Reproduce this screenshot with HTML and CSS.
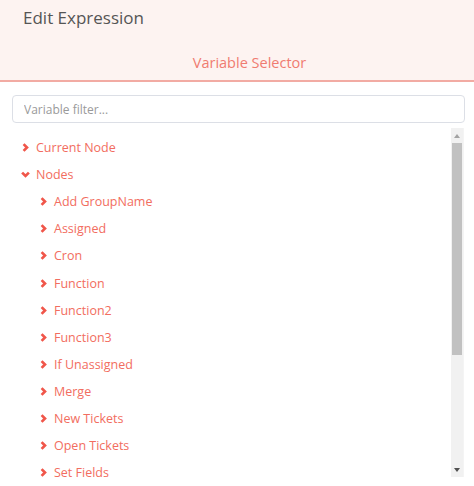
FILE: index.html
```html
<!DOCTYPE html>
<html lang="en">
<head>
    <meta charset="UTF-8">
    <meta name="viewport" content="width=device-width, initial-scale=1.0">
    <title>Edit Expression</title>
    <link rel="stylesheet" href="styles.css">
</head>
<body>
    <div class="dialog">
        <div class="header">
            <h2>Edit Expression</h2>
            <div class="tab-title">Variable Selector</div>
        </div>
        <div class="selector">
            <input type="text" class="filter" placeholder="Variable filter...">
            <div class="tree-wrap">
                <div class="tree">
                    <div class="row lvl1"><span class="chev"><svg viewBox="0 0 8 8"><path d="M2.3 1 L5.3 4 L2.3 7"/></svg></span>Current Node</div>
                    <div class="row lvl1"><span class="chev"><svg viewBox="0 0 8 8"><path d="M1 2.3 L4 5.3 L7 2.3"/></svg></span>Nodes</div>
                    <div class="row lvl2"><span class="chev"><svg viewBox="0 0 8 8"><path d="M2.3 1 L5.3 4 L2.3 7"/></svg></span>Add GroupName</div>
                    <div class="row lvl2"><span class="chev"><svg viewBox="0 0 8 8"><path d="M2.3 1 L5.3 4 L2.3 7"/></svg></span>Assigned</div>
                    <div class="row lvl2"><span class="chev"><svg viewBox="0 0 8 8"><path d="M2.3 1 L5.3 4 L2.3 7"/></svg></span>Cron</div>
                    <div class="row lvl2"><span class="chev"><svg viewBox="0 0 8 8"><path d="M2.3 1 L5.3 4 L2.3 7"/></svg></span>Function</div>
                    <div class="row lvl2"><span class="chev"><svg viewBox="0 0 8 8"><path d="M2.3 1 L5.3 4 L2.3 7"/></svg></span>Function2</div>
                    <div class="row lvl2"><span class="chev"><svg viewBox="0 0 8 8"><path d="M2.3 1 L5.3 4 L2.3 7"/></svg></span>Function3</div>
                    <div class="row lvl2"><span class="chev"><svg viewBox="0 0 8 8"><path d="M2.3 1 L5.3 4 L2.3 7"/></svg></span>If Unassigned</div>
                    <div class="row lvl2"><span class="chev"><svg viewBox="0 0 8 8"><path d="M2.3 1 L5.3 4 L2.3 7"/></svg></span>Merge</div>
                    <div class="row lvl2"><span class="chev"><svg viewBox="0 0 8 8"><path d="M2.3 1 L5.3 4 L2.3 7"/></svg></span>New Tickets</div>
                    <div class="row lvl2"><span class="chev"><svg viewBox="0 0 8 8"><path d="M2.3 1 L5.3 4 L2.3 7"/></svg></span>Open Tickets</div>
                    <div class="row lvl2"><span class="chev"><svg viewBox="0 0 8 8"><path d="M2.3 1 L5.3 4 L2.3 7"/></svg></span>Set Fields</div>
                    <div class="row lvl2"><span class="chev"><svg viewBox="0 0 8 8"><path d="M2.3 1 L5.3 4 L2.3 7"/></svg></span>Start</div>
                    <div class="row lvl2"><span class="chev"><svg viewBox="0 0 8 8"><path d="M2.3 1 L5.3 4 L2.3 7"/></svg></span>Webhook</div>
                </div>
                <div class="scrollbar">
                    <div class="sb-btn"><span class="arrow-up"></span></div>
                    <div class="sb-track"><div class="sb-thumb"></div></div>
                    <div class="sb-btn"><span class="arrow-down"></span></div>
                </div>
            </div>
        </div>
    </div>
</body>
</html>
```

FILE: styles.css
```css
body {
    margin: 0;
    font-family: "Open Sans", Arial, sans-serif;
    background: #fff;
}
.header {
    background: #fdf3f1;
    border-bottom: 2px solid #f2aba3;
    height: 82px;
    box-sizing: border-box;
    padding: 6px 0 0 23px;
}
.header h2 {
    margin: 0;
    font-size: 17px;
    font-weight: 400;
    color: #555;
    line-height: 24px;
}
.tab-title {
    margin-top: 21px;
    padding-left: 2px;
    text-align: center;
    font-size: 14.5px;
    color: #f07b70;
    line-height: 24px;
}
.selector {
    padding: 13px 9px 0 12px;
}
.filter {
    display: block;
    width: 100%;
    box-sizing: border-box;
    height: 28px;
    padding: 0 11px;
    border: 1px solid #dcdfe6;
    border-radius: 4px;
    font-family: inherit;
    font-size: 12px;
    color: #555;
    outline: none;
}
.filter::placeholder {
    color: #9a9a9a;
}
.tree-wrap {
    display: flex;
    margin-top: 5px;
    height: 349px;
}
.tree {
    flex: 1;
    overflow: hidden;
    padding-top: 6px;
}
.scrollbar {
    display: flex;
    flex-direction: column;
    width: 12px;
    margin-right: 1px;
    background: #f1f1f1;
    border-right: 1px solid #f4f4f4;
}
.sb-btn {
    height: 15px;
    display: flex;
    align-items: center;
    justify-content: center;
}
.sb-track {
    flex: 1;
}
.sb-thumb {
    height: 212px;
    background: #c1c1c1;
    margin: 0 1px;
}
.arrow-up {
    width: 0;
    height: 0;
    border-left: 3.5px solid transparent;
    border-right: 3.5px solid transparent;
    border-bottom: 4px solid #a3a3a3;
}
.arrow-down {
    width: 0;
    height: 0;
    border-left: 3.5px solid transparent;
    border-right: 3.5px solid transparent;
    border-top: 4px solid #505050;
}
.row {
    display: flex;
    align-items: center;
    height: 27.1px;
    font-size: 12.5px;
    color: #f26d60;
    white-space: nowrap;
}
.lvl1 {
    padding-left: 9px;
}
.lvl2 {
    padding-left: 27px;
}
.chev {
    display: inline-flex;
    width: 15px;
}
.chev svg {
    width: 9px;
    height: 9px;
    fill: none;
    stroke: #f0564a;
    stroke-width: 2.4;
}
```
